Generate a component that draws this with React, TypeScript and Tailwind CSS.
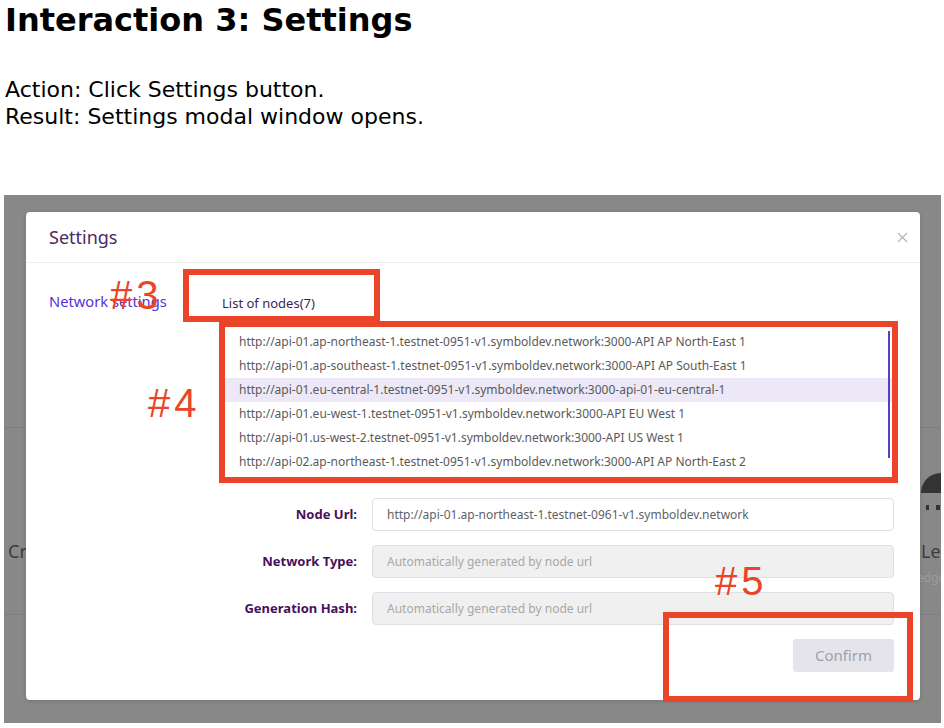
import type { ReactElement } from 'react';

const nodes = [
    'http://api-01.ap-northeast-1.testnet-0951-v1.symboldev.network:3000-API AP North-East 1',
    'http://api-01.ap-southeast-1.testnet-0951-v1.symboldev.network:3000-API AP South-East 1',
    'http://api-01.eu-central-1.testnet-0951-v1.symboldev.network:3000-api-01-eu-central-1',
    'http://api-01.eu-west-1.testnet-0951-v1.symboldev.network:3000-API EU West 1',
    'http://api-01.us-west-2.testnet-0951-v1.symboldev.network:3000-API US West 1',
    'http://api-02.ap-northeast-1.testnet-0951-v1.symboldev.network:3000-API AP North-East 2'
];

const selectedIndex = 2;

function FieldRow({
    label,
    value,
    placeholder,
    disabled
}: {
    label: string;
    value?: string;
    placeholder?: string;
    disabled?: boolean;
}): ReactElement {
    return (
        <div className="flex items-center gap-[15px]">
            <div className="w-[135px] shrink-0 text-right text-[13px] font-bold text-[#46105a]">{label}</div>
            <div
                className={
                    disabled
                        ? 'flex h-[33px] flex-1 items-center rounded-[4px] border border-[#dcdfe6] bg-[#f0f0f0] pl-[14px] text-[12px] text-[#a8a8a8]'
                        : 'flex h-[33px] flex-1 items-center rounded-[4px] border border-[#dcdfe6] bg-white pl-[14px] text-[12px] text-[#606266]'
                }
            >
                {value ?? placeholder}
            </div>
        </div>
    );
}

function NodeList(): ReactElement {
    return (
        <div className="relative mt-[13px] ml-[2px] border border-[#e4e4e4] py-[4px]">
            {nodes.map((node, i) => (
                <div
                    key={node}
                    className={
                        i === selectedIndex
                            ? 'flex h-[24px] items-center bg-[#ece8f7] pl-[14px] text-[12px] text-[#5a5a5a]'
                            : 'flex h-[24px] items-center pl-[14px] text-[12px] text-[#5a5a5a]'
                    }
                >
                    {node}
                </div>
            ))}
            {/* scrollbar thumb */}
            <div className="absolute top-[5px] right-[3px] h-[127px] w-[2px] bg-[#5b3cc4]" />
        </div>
    );
}

function SettingsModal(): ReactElement {
    return (
        <div className="relative z-10 ml-[22px] mt-[17px] h-[488px] w-[894px] rounded-[4px] bg-white shadow-[0_1px_4px_rgba(0,0,0,0.15)] font-['Noto_Sans',sans-serif]">
            <div className="flex h-[51px] items-center justify-between border-b border-[#efefef] pl-[23px] pr-[12px]">
                <span className="text-[18px] leading-[24px] text-[#4a2a63]">Settings</span>
                <svg width="11" height="11" viewBox="0 0 11 11" className="text-[#b4b4b4]">
                    <path d="M1 1 L10 10 M10 1 L1 10" stroke="currentColor" strokeWidth="1.1" fill="none" />
                </svg>
            </div>
            <div className="flex pl-[23px] pr-[26px]">
                <div className="w-[173px] shrink-0 pt-[28px] text-[14.7px] leading-[20px] text-[#5b2fd6]">
                    Network settings
                </div>
                <div className="flex-1 pt-[31px]">
                    <div className="text-[13px] leading-[18px] text-[#3e1f55]">List of nodes(7)</div>
                    <NodeList />
                    <div className="mt-[19px] flex flex-col gap-[14px]">
                        <FieldRow label="Node Url:" value="http://api-01.ap-northeast-1.testnet-0961-v1.symboldev.network" />
                        <FieldRow label="Network Type:" placeholder="Automatically generated by node url" disabled />
                        <FieldRow label="Generation Hash:" placeholder="Automatically generated by node url" disabled />
                    </div>
                    <div className="mt-[14px] flex justify-end">
                        <button className="h-[33px] w-[101px] rounded-[3px] bg-[#e4e4ea] text-[15px] text-[#a0a0a8]">
                            Confirm
                        </button>
                    </div>
                </div>
            </div>
        </div>
    );
}

function Backdrop(): ReactElement {
    return (
        <div className="relative ml-[4px] h-[528px] w-[937px] overflow-hidden bg-[#888888] font-['Noto_Sans',sans-serif]">
            {/* page content dimmed behind the modal */}
            <div className="absolute top-[232px] left-0 h-px w-full bg-[#7e7d86]" />
            <div className="absolute top-[419px] left-0 h-px w-full bg-[#7e7d86]" />
            <div className="absolute top-[343px] left-[4px] text-[18px] text-[#3c3c3c]">Cr</div>
            <div className="absolute top-[278px] left-[917px] h-[20px] w-[40px] rounded-t-full bg-[#343434]" />
            <div className="absolute top-[310px] left-[922px] h-[5px] w-[3px] bg-[#343434]" />
            <div className="absolute top-[310px] left-[932px] h-[5px] w-[4px] bg-[#343434]" />
            <div className="absolute top-[343px] left-[917px] text-[18px] text-[#3c3c3c]">Le</div>
            <div className="absolute top-[374px] left-[913px] text-[12px] text-[#9c9c9c]">edge</div>
            <SettingsModal />
        </div>
    );
}

export default function App(): ReactElement {
    return (
        <div className="relative h-[728px] w-[944px] overflow-hidden bg-white">
            <h1 className="pt-[2px] pl-[5px] font-['DejaVu_Sans',sans-serif] text-[32px] font-bold leading-[36px] text-black">
                Interaction 3: Settings
            </h1>
            <div className="mt-[38px] pl-[5px] font-['DejaVu_Sans',sans-serif] text-[22px] leading-[27px] text-black">
                <div>Action: Click Settings button.</div>
                <div>Result: Settings modal window opens.</div>
            </div>
            <div className="mt-[65px]">
                <Backdrop />
            </div>

            {/* annotations */}
            <div className="absolute top-[269px] left-[183px] z-20 h-[53px] w-[197px] border-[6px] border-[#ea4528]" />
            <div className="absolute top-[321px] left-[219px] z-20 h-[162px] w-[679px] border-[6px] border-[#ea4528]" />
            <div className="absolute top-[612px] left-[663px] z-20 h-[90px] w-[250px] border-[6px] border-[#ea4528]" />
            <div className="absolute top-[275px] left-[110px] z-20 font-['Liberation_Sans',sans-serif] text-[40px] leading-[40px] tracking-[4px] text-[#ea4528]">#3</div>
            <div className="absolute top-[383px] left-[148px] z-20 font-['Liberation_Sans',sans-serif] text-[40px] leading-[40px] tracking-[4px] text-[#ea4528]">#4</div>
            <div className="absolute top-[561px] left-[715px] z-20 font-['Liberation_Sans',sans-serif] text-[40px] leading-[40px] tracking-[4px] text-[#ea4528]">#5</div>
        </div>
    );
}
